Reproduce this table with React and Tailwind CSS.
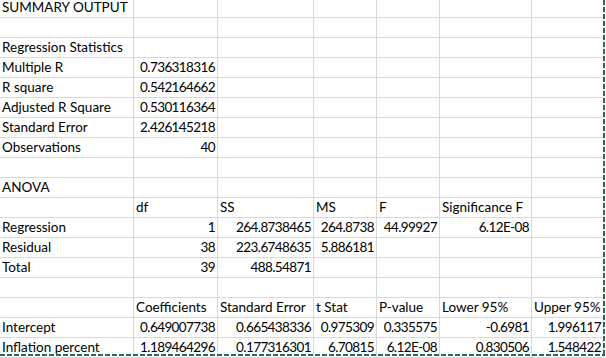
import React from 'react';

// column widths incl. the 1px gridline on the right
const cols = 'grid-cols-[134px_84px_96px_63px_63px_92px_72px]';

const rows = [
  ['SUMMARY OUTPUT'],
  [],
  ['Regression Statistics'],
  ['Multiple R', '0.736318316'],
  ['R square', '0.542164662'],
  ['Adjusted R Square', '0.530116364'],
  ['Standard Error', '2.426145218'],
  ['Observations', '40'],
  [],
  ['ANOVA'],
  ['', 'df', 'SS', 'MS', 'F', 'Significance F'],
  ['Regression', '1', '264.8738465', '264.8738', '44.99927', '6.12E-08'],
  ['Residual', '38', '223.6748635', '5.886181'],
  ['Total', '39', '488.54871'],
  [],
  ['', 'Coefficients', 'Standard Error', 't Stat', 'P-value', 'Lower 95%', 'Upper 95%'],
  ['Intercept', '0.649007738', '0.665438336', '0.975309', '0.335575', '-0.6981', '1.996117'],
  ['Inflation percent', '1.189464296', '0.177316301', '6.70815', '6.12E-08', '0.830506', '1.548422'],
];

const isNum = (v) => /^-?[\d.]+(E-\d+)?$/.test(v);

function Cell({ value }) {
  const num = value && isNum(value);
  return (
    <div
      className={`h-[20px] border-r border-b border-[#d9d9d9] overflow-hidden whitespace-nowrap leading-[19px] ${
        num ? 'text-right pr-[2px] tracking-[-0.6px]' : 'text-left pl-[2px]'
      }`}
    >
      {value}
    </div>
  );
}

export default function App() {
  return (
    <div
      className="relative w-[606px] h-[358px] overflow-hidden bg-white text-black text-[13.5px]"
      style={{ fontFamily: 'Lato, "Liberation Sans", sans-serif' }}
    >
      <div className={`grid ${cols} -mt-[2px]`}>
        {rows.map((row, i) =>
          Array.from({ length: 7 }).map((_, j) => <Cell key={`${i}-${j}`} value={row[j] || ''} />)
        )}
      </div>

      {/* copy selection marching ants */}
      <svg className="absolute left-0 top-0" width="606" height="358">
        <line x1="604" y1="0" x2="604" y2="356" stroke="#217346" strokeWidth="2" strokeDasharray="5 2" />
        <line x1="0" y1="355" x2="605" y2="355" stroke="#217346" strokeWidth="2" strokeDasharray="5 2" />
      </svg>
    </div>
  );
}
